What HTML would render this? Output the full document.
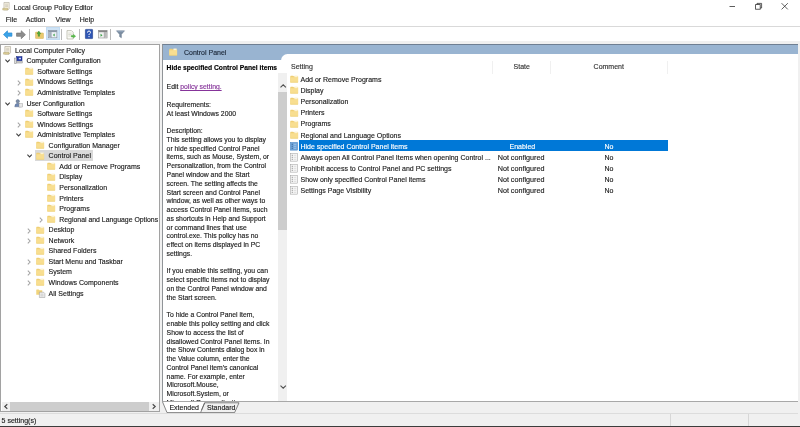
<!DOCTYPE html>
<html><head><meta charset="utf-8"><title>Local Group Policy Editor</title>
<style>
html,body{margin:0;padding:0;}
body{width:800px;height:427px;overflow:hidden;background:#fff;position:relative;font-family:"Liberation Sans",sans-serif;font-size:7.0px;color:#1a1a1a;}
.abs{position:absolute;}
.t{position:absolute;white-space:nowrap;line-height:10px;height:10px;font-size:7.0px;color:#202020;-webkit-text-stroke:0.14px currentColor;}
.t.b{font-size:6.72px;color:#000;}
.t.w{color:#fff;}
.t.d{font-size:6.84px;}
.t.d.b{font-size:6.72px;}
.lnk{color:#86349a;text-decoration:underline;}
.ic{position:absolute;display:block;overflow:visible;}
#all{position:absolute;left:0;top:0;width:800px;height:427px;overflow:hidden;filter:blur(0.42px);}
</style></head><body><div id="all">

<!-- title bar -->
<svg class="ic" style="left:1.6px;top:2.2px;width:8.2px;height:8.6px" viewBox="0 0 16 18">
<path d="M3.5 1 L14.5 1 L14.5 14 L12 16.5 L3.5 16.5 Z" fill="#f6f1e2" stroke="#9a9384" stroke-width="1"/>
<path d="M1 13.2 L11.5 13.2 L11.5 16.8 L1 16.8 Z" fill="#e3d39a" stroke="#a79a62" stroke-width="0.9"/>
<path d="M6 4.5H12M6 7H12M6 9.5H12" stroke="#b5b0a3" stroke-width="1"/>
</svg>
<div class="t" style="left:13.8px;top:2.6px;color:#222">Local Group Policy Editor</div>
<!-- window buttons -->
<svg class="ic" style="left:728px;top:2px;width:66px;height:10px" viewBox="0 0 66 10">
<path d="M1.5 4.5H7" stroke="#333" stroke-width="0.8"/>
<rect x="27.6" y="2.6" width="4.6" height="4.6" fill="none" stroke="#333" stroke-width="0.8"/>
<path d="M29 2.6V1.4H33.6V6H32.2" fill="none" stroke="#333" stroke-width="0.8"/>
<path d="M53.6 1.2L59.8 7.4M59.8 1.2L53.6 7.4" stroke="#333" stroke-width="0.8"/>
</svg>

<!-- menu -->
<div class="t" style="left:5.8px;top:15.0px">File</div>
<div class="t" style="left:25.8px;top:15.0px">Action</div>
<div class="t" style="left:55.6px;top:15.0px">View</div>
<div class="t" style="left:79.8px;top:15.0px">Help</div>
<div class="abs" style="left:0;top:25.6px;width:800px;height:1px;background:#d9d9d9"></div>

<!-- toolbar -->
<div class="abs" style="left:0;top:41.4px;width:800px;height:3.2px;background:#f0f0f0"></div>

<!-- back -->
<svg class="ic" style="left:3px;top:29.6px;width:9.4px;height:9.2px" viewBox="0 0 20 19">
<path d="M9.5 1.5 L1 9.5 L9.5 17.5 L9.5 13 L19 13 L19 6 L9.5 6 Z" fill="#3aa3e8" stroke="#2487d0" stroke-width="1.4" stroke-linejoin="round"/>
</svg>
<!-- forward -->
<svg class="ic" style="left:16.2px;top:29.6px;width:10px;height:9.4px" viewBox="0 0 20 19">
<path d="M10.5 1.5 L19 9.5 L10.5 17.5 L10.5 12.8 L1 12.8 L1 6.2 L10.5 6.2 Z" fill="#8c8c8c" stroke="#767676" stroke-width="1.4" stroke-linejoin="round"/>
</svg>
<div class="abs" style="left:29.4px;top:28.6px;width:0.8px;height:11.4px;background:#b9b9b9"></div>
<!-- up folder -->
<svg class="ic" style="left:34.8px;top:29.8px;width:9px;height:9px" viewBox="0 0 18 18">
<path d="M1 5 Q1 4 2 4 L6 4 L7.5 5.8 L16 5.8 Q17 5.8 17 6.8 L17 16 Q17 17 16 17 L2 17 Q1 17 1 16 Z" fill="#e9c96e" stroke="#c9a74a" stroke-width="0.8"/>
<path d="M4 9.5 L4 12 L6.5 12 L6.5 7 L9 7 L5.2 1.5 L1.5 7 L4 7 Z" transform="translate(2.5,0.5)" fill="#4caf3c" stroke="#2d7f22" stroke-width="0.8"/>
</svg>
<!-- show/hide tree (active) -->
<div class="abs" style="left:45.8px;top:27.2px;width:14.2px;height:12.8px;background:#cfe3f5;border:0.4px solid #c2dcf3;box-sizing:border-box"></div>
<svg class="ic" style="left:48.3px;top:30.4px;width:9.4px;height:8.2px" viewBox="0 0 19 17">
<rect x="0.8" y="0.8" width="17.4" height="15.4" fill="#eef2f6" stroke="#7f8b98" stroke-width="1.2"/>
<rect x="1.4" y="4.4" width="5" height="11.2" fill="#a9b4c0"/>
<rect x="0.8" y="0.8" width="17.4" height="3.6" fill="#8a97a6"/>
<path d="M6.5 4.4V16" stroke="#8a97a6" stroke-width="1.1"/>
<path d="M12.5 7.5 L12.5 13.5 L9 10.5 Z" transform="translate(1,0)" fill="#2e9a3a"/>
</svg>
<div class="abs" style="left:60.9px;top:28.6px;width:0.8px;height:11.4px;background:#b9b9b9"></div>
<!-- export -->
<svg class="ic" style="left:65.6px;top:29.6px;width:10.4px;height:9.6px" viewBox="0 0 21 19">
<path d="M2 1 L11 1 L14.5 4.5 L14.5 18 L2 18 Z" fill="#fbfbf6" stroke="#9b9b8b" stroke-width="1.1"/>
<path d="M4.5 6H11.5M4.5 9H11.5M4.5 12H9" stroke="#b9b9aa" stroke-width="1"/>
<path d="M10.5 11 L15 11 L15 8.6 L19.6 12.4 L15 16.2 L15 13.8 L10.5 13.8 Z" fill="#5cc04c" stroke="#3a9a2e" stroke-width="0.7"/>
</svg>
<div class="abs" style="left:79.4px;top:28.6px;width:0.8px;height:11.4px;background:#b9b9b9"></div>
<!-- help -->
<svg class="ic" style="left:84.8px;top:29.2px;width:8px;height:10px" viewBox="0 0 16 20">
<rect x="0.8" y="0.8" width="14.4" height="18.4" rx="1" fill="#2f56b5" stroke="#1c3a86" stroke-width="1.2"/>
<path d="M5 7.2 Q5 4 8 4 Q11 4 11 6.8 Q11 8.6 9.2 9.6 Q8 10.3 8 12" fill="none" stroke="#fff" stroke-width="2"/>
<circle cx="8" cy="15.2" r="1.3" fill="#fff"/>
</svg>
<!-- action pane -->
<svg class="ic" style="left:97.6px;top:30.4px;width:9.6px;height:8.4px" viewBox="0 0 19 17">
<rect x="0.8" y="0.8" width="17.4" height="15.4" fill="#f0f0f0" stroke="#8c8c8c" stroke-width="1.2"/>
<rect x="12.5" y="4.4" width="5.2" height="11.2" fill="#b9b9b9"/>
<rect x="0.8" y="0.8" width="17.4" height="3.6" fill="#858585"/>
<path d="M12.5 4.4V16" stroke="#979797" stroke-width="1.1"/>
<path d="M5 7.5 L5 13.5 L8.8 10.5 Z" fill="#2e9a3a"/>
</svg>
<div class="abs" style="left:110.3px;top:28.6px;width:0.8px;height:11.4px;background:#b9b9b9"></div>
<!-- filter -->
<svg class="ic" style="left:116.4px;top:30.2px;width:9px;height:8.8px" viewBox="0 0 20 19">
<path d="M1 1.5 L19 1.5 L12 9.5 L12 17 L8 14.5 L8 9.5 Z" fill="#7d8ea2" stroke="#66788c" stroke-width="1.1" stroke-linejoin="round"/>
<path d="M3.5 2.8 L16.5 2.8" stroke="#a9bfd6" stroke-width="1"/>
</svg>


<!-- tree pane -->
<div class="abs" style="left:0;top:44.2px;width:161px;height:369px;background:#f0f0f0"></div>
<div class="abs" style="left:0.2px;top:44.4px;width:159.8px;height:367.6px;background:#fff;border:0.7px solid #a2a2a2;box-sizing:border-box"></div>
<svg class="ic" style="left:3.10px;top:45.70px;width:8.4px;height:8.8px" viewBox="0 0 16 17"><path d="M3.5 1 L14.5 1 L14.5 13 L12 15.5 L3.5 15.5 Z" fill="#f6f1e2" stroke="#9a9384" stroke-width="1"/><path d="M1 12.5 L11.5 12.5 L11.5 15.8 L1 15.8 Z" fill="#e3d39a" stroke="#a79a62" stroke-width="0.9"/><path d="M6 4.5H12M6 7H12M6 9.5H12" stroke="#b5b0a3" stroke-width="1"/></svg>
<div class="t " style="left:15.00px;top:45.70px;">Local Computer Policy</div>
<svg class="ic" style="left:5.30px;top:59.26px;width:5.2px;height:3.6px" viewBox="0 0 5.2 3.6"><path d="M0.4 0.6 L2.6 2.9 L4.8 0.6" fill="none" stroke="#404040" stroke-width="1.05"/></svg>
<svg class="ic" style="left:14.30px;top:56.46px;width:9px;height:8.6px" viewBox="0 0 18 17"><rect x="5" y="1" width="11" height="8.5" fill="#2237a8" stroke="#1a2a7c" stroke-width="1"/><rect x="9.5" y="3.5" width="4.5" height="3" fill="#c9d6f7"/><rect x="3" y="11" width="14" height="3" fill="#c9c9c9" stroke="#8a8a8a" stroke-width="0.8"/><rect x="0.8" y="4" width="4.2" height="11" fill="#dcdcdc" stroke="#777" stroke-width="0.8"/></svg>
<div class="t " style="left:26.40px;top:56.26px;">Computer Configuration</div>
<svg class="ic" style="left:25.00px;top:67.12px;width:8.4px;height:7.8px" viewBox="0 0 16 15"><path d="M0.5 2.4 Q0.5 1.4 1.5 1.4 L6 1.4 L7.2 2.6 L15.5 2.6 L15.5 14 L0.5 14 Z" fill="#efcf74"/><path d="M8.5 1 L14.6 1 L14.6 5 L8.5 5 Z" fill="#fcf3d3"/><path d="M0.5 4.4 L15.5 4.4 L15.5 13.6 Q15.5 14.4 14.7 14.4 L1.3 14.4 Q0.5 14.4 0.5 13.6 Z" fill="#f8de90"/><path d="M0.5 14 L15.5 14" stroke="#e8c867" stroke-width="0.8"/></svg>
<div class="t " style="left:37.30px;top:66.82px;">Software Settings</div>
<svg class="ic" style="left:16.50px;top:79.68px;width:4px;height:6px" viewBox="0 0 4 6"><path d="M0.8 0.7 L3.1 3 L0.8 5.3" fill="none" stroke="#a2a2a2" stroke-width="1.05"/></svg>
<svg class="ic" style="left:25.00px;top:77.68px;width:8.4px;height:7.8px" viewBox="0 0 16 15"><path d="M0.5 2.4 Q0.5 1.4 1.5 1.4 L6 1.4 L7.2 2.6 L15.5 2.6 L15.5 14 L0.5 14 Z" fill="#efcf74"/><path d="M8.5 1 L14.6 1 L14.6 5 L8.5 5 Z" fill="#fcf3d3"/><path d="M0.5 4.4 L15.5 4.4 L15.5 13.6 Q15.5 14.4 14.7 14.4 L1.3 14.4 Q0.5 14.4 0.5 13.6 Z" fill="#f8de90"/><path d="M0.5 14 L15.5 14" stroke="#e8c867" stroke-width="0.8"/></svg>
<div class="t " style="left:37.30px;top:77.38px;">Windows Settings</div>
<svg class="ic" style="left:16.50px;top:90.24px;width:4px;height:6px" viewBox="0 0 4 6"><path d="M0.8 0.7 L3.1 3 L0.8 5.3" fill="none" stroke="#a2a2a2" stroke-width="1.05"/></svg>
<svg class="ic" style="left:25.00px;top:88.24px;width:8.4px;height:7.8px" viewBox="0 0 16 15"><path d="M0.5 2.4 Q0.5 1.4 1.5 1.4 L6 1.4 L7.2 2.6 L15.5 2.6 L15.5 14 L0.5 14 Z" fill="#efcf74"/><path d="M8.5 1 L14.6 1 L14.6 5 L8.5 5 Z" fill="#fcf3d3"/><path d="M0.5 4.4 L15.5 4.4 L15.5 13.6 Q15.5 14.4 14.7 14.4 L1.3 14.4 Q0.5 14.4 0.5 13.6 Z" fill="#f8de90"/><path d="M0.5 14 L15.5 14" stroke="#e8c867" stroke-width="0.8"/></svg>
<div class="t " style="left:37.30px;top:87.94px;">Administrative Templates</div>
<svg class="ic" style="left:5.30px;top:101.50px;width:5.2px;height:3.6px" viewBox="0 0 5.2 3.6"><path d="M0.4 0.6 L2.6 2.9 L4.8 0.6" fill="none" stroke="#404040" stroke-width="1.05"/></svg>
<svg class="ic" style="left:14.30px;top:98.70px;width:9px;height:8.6px" viewBox="0 0 18 17"><circle cx="7.5" cy="4.5" r="3.4" fill="#7d8ea8" stroke="#4f5f78" stroke-width="0.8"/><path d="M1.5 15.5 Q1.5 8.5 7.5 8.5 Q13.5 8.5 13.5 15.5 Z" fill="#6f88b3" stroke="#4a5c7c" stroke-width="0.8"/><rect x="10" y="9.5" width="7" height="6.5" fill="#e9e9e9" stroke="#8b8b8b" stroke-width="0.8"/></svg>
<div class="t " style="left:26.40px;top:98.50px;">User Configuration</div>
<svg class="ic" style="left:25.00px;top:109.36px;width:8.4px;height:7.8px" viewBox="0 0 16 15"><path d="M0.5 2.4 Q0.5 1.4 1.5 1.4 L6 1.4 L7.2 2.6 L15.5 2.6 L15.5 14 L0.5 14 Z" fill="#efcf74"/><path d="M8.5 1 L14.6 1 L14.6 5 L8.5 5 Z" fill="#fcf3d3"/><path d="M0.5 4.4 L15.5 4.4 L15.5 13.6 Q15.5 14.4 14.7 14.4 L1.3 14.4 Q0.5 14.4 0.5 13.6 Z" fill="#f8de90"/><path d="M0.5 14 L15.5 14" stroke="#e8c867" stroke-width="0.8"/></svg>
<div class="t " style="left:37.30px;top:109.06px;">Software Settings</div>
<svg class="ic" style="left:16.50px;top:121.92px;width:4px;height:6px" viewBox="0 0 4 6"><path d="M0.8 0.7 L3.1 3 L0.8 5.3" fill="none" stroke="#a2a2a2" stroke-width="1.05"/></svg>
<svg class="ic" style="left:25.00px;top:119.92px;width:8.4px;height:7.8px" viewBox="0 0 16 15"><path d="M0.5 2.4 Q0.5 1.4 1.5 1.4 L6 1.4 L7.2 2.6 L15.5 2.6 L15.5 14 L0.5 14 Z" fill="#efcf74"/><path d="M8.5 1 L14.6 1 L14.6 5 L8.5 5 Z" fill="#fcf3d3"/><path d="M0.5 4.4 L15.5 4.4 L15.5 13.6 Q15.5 14.4 14.7 14.4 L1.3 14.4 Q0.5 14.4 0.5 13.6 Z" fill="#f8de90"/><path d="M0.5 14 L15.5 14" stroke="#e8c867" stroke-width="0.8"/></svg>
<div class="t " style="left:37.30px;top:119.62px;">Windows Settings</div>
<svg class="ic" style="left:16.00px;top:133.18px;width:5.2px;height:3.6px" viewBox="0 0 5.2 3.6"><path d="M0.4 0.6 L2.6 2.9 L4.8 0.6" fill="none" stroke="#404040" stroke-width="1.05"/></svg>
<svg class="ic" style="left:25.00px;top:130.48px;width:8.4px;height:7.8px" viewBox="0 0 16 15"><path d="M0.5 2.4 Q0.5 1.4 1.5 1.4 L6 1.4 L7.2 2.6 L15.5 2.6 L15.5 14 L0.5 14 Z" fill="#efcf74"/><path d="M8.5 1 L14.6 1 L14.6 5 L8.5 5 Z" fill="#fcf3d3"/><path d="M0.5 4.4 L15.5 4.4 L15.5 13.6 Q15.5 14.4 14.7 14.4 L1.3 14.4 Q0.5 14.4 0.5 13.6 Z" fill="#f8de90"/><path d="M0.5 14 L15.5 14" stroke="#e8c867" stroke-width="0.8"/></svg>
<div class="t " style="left:37.30px;top:130.18px;">Administrative Templates</div>
<svg class="ic" style="left:35.80px;top:141.04px;width:8.4px;height:7.8px" viewBox="0 0 16 15"><path d="M0.5 2.4 Q0.5 1.4 1.5 1.4 L6 1.4 L7.2 2.6 L15.5 2.6 L15.5 14 L0.5 14 Z" fill="#efcf74"/><path d="M8.5 1 L14.6 1 L14.6 5 L8.5 5 Z" fill="#fcf3d3"/><path d="M0.5 4.4 L15.5 4.4 L15.5 13.6 Q15.5 14.4 14.7 14.4 L1.3 14.4 Q0.5 14.4 0.5 13.6 Z" fill="#f8de90"/><path d="M0.5 14 L15.5 14" stroke="#e8c867" stroke-width="0.8"/></svg>
<div class="t " style="left:48.60px;top:140.74px;">Configuration Manager</div>
<div class="abs" style="left:35px;top:150.40px;width:57.7px;height:10.7px;background:#d9d9d9"></div>
<svg class="ic" style="left:26.80px;top:154.30px;width:5.2px;height:3.6px" viewBox="0 0 5.2 3.6"><path d="M0.4 0.6 L2.6 2.9 L4.8 0.6" fill="none" stroke="#404040" stroke-width="1.05"/></svg>
<svg class="ic" style="left:35.80px;top:151.60px;width:8.4px;height:7.8px" viewBox="0 0 16 15"><path d="M0.5 2.4 Q0.5 1.4 1.5 1.4 L6 1.4 L7.2 2.6 L15.5 2.6 L15.5 14 L0.5 14 Z" fill="#efcf74"/><path d="M8.5 1 L14.6 1 L14.6 5 L8.5 5 Z" fill="#fcf3d3"/><path d="M0.5 4.4 L15.5 4.4 L15.5 13.6 Q15.5 14.4 14.7 14.4 L1.3 14.4 Q0.5 14.4 0.5 13.6 Z" fill="#f8de90"/><path d="M0.5 14 L15.5 14" stroke="#e8c867" stroke-width="0.8"/></svg>
<div class="t " style="left:48.60px;top:151.30px;">Control Panel</div>
<svg class="ic" style="left:47.00px;top:162.16px;width:8.4px;height:7.8px" viewBox="0 0 16 15"><path d="M0.5 2.4 Q0.5 1.4 1.5 1.4 L6 1.4 L7.2 2.6 L15.5 2.6 L15.5 14 L0.5 14 Z" fill="#efcf74"/><path d="M8.5 1 L14.6 1 L14.6 5 L8.5 5 Z" fill="#fcf3d3"/><path d="M0.5 4.4 L15.5 4.4 L15.5 13.6 Q15.5 14.4 14.7 14.4 L1.3 14.4 Q0.5 14.4 0.5 13.6 Z" fill="#f8de90"/><path d="M0.5 14 L15.5 14" stroke="#e8c867" stroke-width="0.8"/></svg>
<div class="t " style="left:59.30px;top:161.86px;">Add or Remove Programs</div>
<svg class="ic" style="left:47.00px;top:172.72px;width:8.4px;height:7.8px" viewBox="0 0 16 15"><path d="M0.5 2.4 Q0.5 1.4 1.5 1.4 L6 1.4 L7.2 2.6 L15.5 2.6 L15.5 14 L0.5 14 Z" fill="#efcf74"/><path d="M8.5 1 L14.6 1 L14.6 5 L8.5 5 Z" fill="#fcf3d3"/><path d="M0.5 4.4 L15.5 4.4 L15.5 13.6 Q15.5 14.4 14.7 14.4 L1.3 14.4 Q0.5 14.4 0.5 13.6 Z" fill="#f8de90"/><path d="M0.5 14 L15.5 14" stroke="#e8c867" stroke-width="0.8"/></svg>
<div class="t " style="left:59.30px;top:172.42px;">Display</div>
<svg class="ic" style="left:47.00px;top:183.28px;width:8.4px;height:7.8px" viewBox="0 0 16 15"><path d="M0.5 2.4 Q0.5 1.4 1.5 1.4 L6 1.4 L7.2 2.6 L15.5 2.6 L15.5 14 L0.5 14 Z" fill="#efcf74"/><path d="M8.5 1 L14.6 1 L14.6 5 L8.5 5 Z" fill="#fcf3d3"/><path d="M0.5 4.4 L15.5 4.4 L15.5 13.6 Q15.5 14.4 14.7 14.4 L1.3 14.4 Q0.5 14.4 0.5 13.6 Z" fill="#f8de90"/><path d="M0.5 14 L15.5 14" stroke="#e8c867" stroke-width="0.8"/></svg>
<div class="t " style="left:59.30px;top:182.98px;">Personalization</div>
<svg class="ic" style="left:47.00px;top:193.84px;width:8.4px;height:7.8px" viewBox="0 0 16 15"><path d="M0.5 2.4 Q0.5 1.4 1.5 1.4 L6 1.4 L7.2 2.6 L15.5 2.6 L15.5 14 L0.5 14 Z" fill="#efcf74"/><path d="M8.5 1 L14.6 1 L14.6 5 L8.5 5 Z" fill="#fcf3d3"/><path d="M0.5 4.4 L15.5 4.4 L15.5 13.6 Q15.5 14.4 14.7 14.4 L1.3 14.4 Q0.5 14.4 0.5 13.6 Z" fill="#f8de90"/><path d="M0.5 14 L15.5 14" stroke="#e8c867" stroke-width="0.8"/></svg>
<div class="t " style="left:59.30px;top:193.54px;">Printers</div>
<svg class="ic" style="left:47.00px;top:204.40px;width:8.4px;height:7.8px" viewBox="0 0 16 15"><path d="M0.5 2.4 Q0.5 1.4 1.5 1.4 L6 1.4 L7.2 2.6 L15.5 2.6 L15.5 14 L0.5 14 Z" fill="#efcf74"/><path d="M8.5 1 L14.6 1 L14.6 5 L8.5 5 Z" fill="#fcf3d3"/><path d="M0.5 4.4 L15.5 4.4 L15.5 13.6 Q15.5 14.4 14.7 14.4 L1.3 14.4 Q0.5 14.4 0.5 13.6 Z" fill="#f8de90"/><path d="M0.5 14 L15.5 14" stroke="#e8c867" stroke-width="0.8"/></svg>
<div class="t " style="left:59.30px;top:204.10px;">Programs</div>
<svg class="ic" style="left:38.50px;top:216.96px;width:4px;height:6px" viewBox="0 0 4 6"><path d="M0.8 0.7 L3.1 3 L0.8 5.3" fill="none" stroke="#a2a2a2" stroke-width="1.05"/></svg>
<svg class="ic" style="left:47.00px;top:214.96px;width:8.4px;height:7.8px" viewBox="0 0 16 15"><path d="M0.5 2.4 Q0.5 1.4 1.5 1.4 L6 1.4 L7.2 2.6 L15.5 2.6 L15.5 14 L0.5 14 Z" fill="#efcf74"/><path d="M8.5 1 L14.6 1 L14.6 5 L8.5 5 Z" fill="#fcf3d3"/><path d="M0.5 4.4 L15.5 4.4 L15.5 13.6 Q15.5 14.4 14.7 14.4 L1.3 14.4 Q0.5 14.4 0.5 13.6 Z" fill="#f8de90"/><path d="M0.5 14 L15.5 14" stroke="#e8c867" stroke-width="0.8"/></svg>
<div class="t " style="left:59.30px;top:214.66px;font-size:6.9px">Regional and Language Options</div>
<svg class="ic" style="left:27.30px;top:227.52px;width:4px;height:6px" viewBox="0 0 4 6"><path d="M0.8 0.7 L3.1 3 L0.8 5.3" fill="none" stroke="#a2a2a2" stroke-width="1.05"/></svg>
<svg class="ic" style="left:35.80px;top:225.52px;width:8.4px;height:7.8px" viewBox="0 0 16 15"><path d="M0.5 2.4 Q0.5 1.4 1.5 1.4 L6 1.4 L7.2 2.6 L15.5 2.6 L15.5 14 L0.5 14 Z" fill="#efcf74"/><path d="M8.5 1 L14.6 1 L14.6 5 L8.5 5 Z" fill="#fcf3d3"/><path d="M0.5 4.4 L15.5 4.4 L15.5 13.6 Q15.5 14.4 14.7 14.4 L1.3 14.4 Q0.5 14.4 0.5 13.6 Z" fill="#f8de90"/><path d="M0.5 14 L15.5 14" stroke="#e8c867" stroke-width="0.8"/></svg>
<div class="t " style="left:48.60px;top:225.22px;">Desktop</div>
<svg class="ic" style="left:27.30px;top:238.08px;width:4px;height:6px" viewBox="0 0 4 6"><path d="M0.8 0.7 L3.1 3 L0.8 5.3" fill="none" stroke="#a2a2a2" stroke-width="1.05"/></svg>
<svg class="ic" style="left:35.80px;top:236.08px;width:8.4px;height:7.8px" viewBox="0 0 16 15"><path d="M0.5 2.4 Q0.5 1.4 1.5 1.4 L6 1.4 L7.2 2.6 L15.5 2.6 L15.5 14 L0.5 14 Z" fill="#efcf74"/><path d="M8.5 1 L14.6 1 L14.6 5 L8.5 5 Z" fill="#fcf3d3"/><path d="M0.5 4.4 L15.5 4.4 L15.5 13.6 Q15.5 14.4 14.7 14.4 L1.3 14.4 Q0.5 14.4 0.5 13.6 Z" fill="#f8de90"/><path d="M0.5 14 L15.5 14" stroke="#e8c867" stroke-width="0.8"/></svg>
<div class="t " style="left:48.60px;top:235.78px;">Network</div>
<svg class="ic" style="left:35.80px;top:246.64px;width:8.4px;height:7.8px" viewBox="0 0 16 15"><path d="M0.5 2.4 Q0.5 1.4 1.5 1.4 L6 1.4 L7.2 2.6 L15.5 2.6 L15.5 14 L0.5 14 Z" fill="#efcf74"/><path d="M8.5 1 L14.6 1 L14.6 5 L8.5 5 Z" fill="#fcf3d3"/><path d="M0.5 4.4 L15.5 4.4 L15.5 13.6 Q15.5 14.4 14.7 14.4 L1.3 14.4 Q0.5 14.4 0.5 13.6 Z" fill="#f8de90"/><path d="M0.5 14 L15.5 14" stroke="#e8c867" stroke-width="0.8"/></svg>
<div class="t " style="left:48.60px;top:246.34px;">Shared Folders</div>
<svg class="ic" style="left:27.30px;top:259.20px;width:4px;height:6px" viewBox="0 0 4 6"><path d="M0.8 0.7 L3.1 3 L0.8 5.3" fill="none" stroke="#a2a2a2" stroke-width="1.05"/></svg>
<svg class="ic" style="left:35.80px;top:257.20px;width:8.4px;height:7.8px" viewBox="0 0 16 15"><path d="M0.5 2.4 Q0.5 1.4 1.5 1.4 L6 1.4 L7.2 2.6 L15.5 2.6 L15.5 14 L0.5 14 Z" fill="#efcf74"/><path d="M8.5 1 L14.6 1 L14.6 5 L8.5 5 Z" fill="#fcf3d3"/><path d="M0.5 4.4 L15.5 4.4 L15.5 13.6 Q15.5 14.4 14.7 14.4 L1.3 14.4 Q0.5 14.4 0.5 13.6 Z" fill="#f8de90"/><path d="M0.5 14 L15.5 14" stroke="#e8c867" stroke-width="0.8"/></svg>
<div class="t " style="left:48.60px;top:256.90px;">Start Menu and Taskbar</div>
<svg class="ic" style="left:27.30px;top:269.76px;width:4px;height:6px" viewBox="0 0 4 6"><path d="M0.8 0.7 L3.1 3 L0.8 5.3" fill="none" stroke="#a2a2a2" stroke-width="1.05"/></svg>
<svg class="ic" style="left:35.80px;top:267.76px;width:8.4px;height:7.8px" viewBox="0 0 16 15"><path d="M0.5 2.4 Q0.5 1.4 1.5 1.4 L6 1.4 L7.2 2.6 L15.5 2.6 L15.5 14 L0.5 14 Z" fill="#efcf74"/><path d="M8.5 1 L14.6 1 L14.6 5 L8.5 5 Z" fill="#fcf3d3"/><path d="M0.5 4.4 L15.5 4.4 L15.5 13.6 Q15.5 14.4 14.7 14.4 L1.3 14.4 Q0.5 14.4 0.5 13.6 Z" fill="#f8de90"/><path d="M0.5 14 L15.5 14" stroke="#e8c867" stroke-width="0.8"/></svg>
<div class="t " style="left:48.60px;top:267.46px;">System</div>
<svg class="ic" style="left:27.30px;top:280.32px;width:4px;height:6px" viewBox="0 0 4 6"><path d="M0.8 0.7 L3.1 3 L0.8 5.3" fill="none" stroke="#a2a2a2" stroke-width="1.05"/></svg>
<svg class="ic" style="left:35.80px;top:278.32px;width:8.4px;height:7.8px" viewBox="0 0 16 15"><path d="M0.5 2.4 Q0.5 1.4 1.5 1.4 L6 1.4 L7.2 2.6 L15.5 2.6 L15.5 14 L0.5 14 Z" fill="#efcf74"/><path d="M8.5 1 L14.6 1 L14.6 5 L8.5 5 Z" fill="#fcf3d3"/><path d="M0.5 4.4 L15.5 4.4 L15.5 13.6 Q15.5 14.4 14.7 14.4 L1.3 14.4 Q0.5 14.4 0.5 13.6 Z" fill="#f8de90"/><path d="M0.5 14 L15.5 14" stroke="#e8c867" stroke-width="0.8"/></svg>
<div class="t " style="left:48.60px;top:278.02px;">Windows Components</div>
<svg class="ic" style="left:35.80px;top:288.78px;width:9.4px;height:9px" viewBox="0 0 18 17"><path d="M0.5 2 Q0.5 1 1.5 1 L5 1 L6.5 2.5 L12 2.5 L12 11 L0.5 11 Z" fill="#f1d47c"/><path d="M6.5 6 L14.5 6 L17 8.5 L17 16.2 L6.5 16.2 Z" fill="#f3f3f3" stroke="#8d8d8d" stroke-width="0.9"/><path d="M8.5 9.5H14.5M8.5 11.5H14.5M8.5 13.5H14.5" stroke="#a9a9a9" stroke-width="0.8"/></svg>
<div class="t " style="left:48.60px;top:288.58px;">All Settings</div>
<!-- tree hscroll -->
<div class="abs" style="left:1.6px;top:402.4px;width:157.6px;height:9px;background:#f0f0f0"></div>
<div class="abs" style="left:10.4px;top:402.4px;width:138.4px;height:9px;background:#cdcdcd"></div>
<svg class="ic" style="left:3.6px;top:404.4px;width:4px;height:5px" viewBox="0 0 4 5"><path d="M3.3 0.3L0.8 2.5L3.3 4.7" fill="none" stroke="#484848" stroke-width="1.15"/></svg>
<svg class="ic" style="left:152.4px;top:404.4px;width:4px;height:5px" viewBox="0 0 4 5"><path d="M0.7 0.3L3.2 2.5L0.7 4.7" fill="none" stroke="#484848" stroke-width="1.15"/></svg>

<!-- right pane -->
<div class="abs" style="left:161px;top:44.2px;width:639px;height:369px;background:#f0f0f0"></div>
<div class="abs" style="left:161.8px;top:44.2px;width:636px;height:357.6px;background:#fff;border-left:0.9px solid #909498;border-top:1px solid #6f7f92;border-bottom:1px solid #a8a8a8;box-sizing:border-box"></div>
<div class="abs" style="left:162.8px;top:45.2px;width:636.4px;height:14.5px;background:#99b4d1"></div>
<div class="abs" style="left:281.2px;top:53.8px;width:520px;height:12px;background:#fff;border-top-left-radius:6.5px"></div>
<svg class="ic" style="left:169.20px;top:48.40px;width:8.4px;height:7.8px" viewBox="0 0 16 15"><path d="M0.5 2.4 Q0.5 1.4 1.5 1.4 L6 1.4 L7.2 2.6 L15.5 2.6 L15.5 14 L0.5 14 Z" fill="#efcf74"/><path d="M8.5 1 L14.6 1 L14.6 5 L8.5 5 Z" fill="#fcf3d3"/><path d="M0.5 4.4 L15.5 4.4 L15.5 13.6 Q15.5 14.4 14.7 14.4 L1.3 14.4 Q0.5 14.4 0.5 13.6 Z" fill="#f8de90"/><path d="M0.5 14 L15.5 14" stroke="#e8c867" stroke-width="0.8"/></svg>
<div class="t" style="left:184px;top:48px;color:#1b2738">Control Panel</div>

<div class="abs" style="left:0;top:0;width:278px;height:401.2px;overflow:hidden">
<div class="t b d" style="left:166.60px;top:62.80px;"><b>Hide specified Control Panel items</b></div>
<div class="t  d" style="left:166.60px;top:82.00px;">Edit <span class="lnk">policy setting.</span></div>
<div class="t  d" style="left:166.60px;top:99.90px;">Requirements:</div>
<div class="t  d" style="left:166.60px;top:108.80px;">At least Windows 2000</div>
<div class="t  d" style="left:166.60px;top:126.00px;">Description:</div>
<div class="t  d" style="left:166.60px;top:134.90px;">This setting allows you to display</div>
<div class="t  d" style="left:166.60px;top:143.67px;">or hide specified Control Panel</div>
<div class="t  d" style="left:166.60px;top:152.44px;">items, such as Mouse, System, or</div>
<div class="t  d" style="left:166.60px;top:161.21px;">Personalization, from the Control</div>
<div class="t  d" style="left:166.60px;top:169.98px;">Panel window and the Start</div>
<div class="t  d" style="left:166.60px;top:178.75px;">screen. The setting affects the</div>
<div class="t  d" style="left:166.60px;top:187.52px;">Start screen and Control Panel</div>
<div class="t  d" style="left:166.60px;top:196.29px;">window, as well as other ways to</div>
<div class="t  d" style="left:166.60px;top:205.06px;">access Control Panel items, such</div>
<div class="t  d" style="left:166.60px;top:213.83px;">as shortcuts in Help and Support</div>
<div class="t  d" style="left:166.60px;top:222.60px;">or command lines that use</div>
<div class="t  d" style="left:166.60px;top:231.37px;">control.exe. This policy has no</div>
<div class="t  d" style="left:166.60px;top:240.14px;">effect on items displayed in PC</div>
<div class="t  d" style="left:166.60px;top:248.91px;">settings.</div>
<div class="t  d" style="left:166.60px;top:266.45px;">If you enable this setting, you can</div>
<div class="t  d" style="left:166.60px;top:275.22px;">select specific items not to display</div>
<div class="t  d" style="left:166.60px;top:283.99px;">on the Control Panel window and</div>
<div class="t  d" style="left:166.60px;top:292.76px;">the Start screen.</div>
<div class="t  d" style="left:166.60px;top:310.30px;">To hide a Control Panel item,</div>
<div class="t  d" style="left:166.60px;top:319.07px;">enable this policy setting and click</div>
<div class="t  d" style="left:166.60px;top:327.84px;">Show to access the list of</div>
<div class="t  d" style="left:166.60px;top:336.61px;">disallowed Control Panel items. In</div>
<div class="t  d" style="left:166.60px;top:345.38px;">the Show Contents dialog box in</div>
<div class="t  d" style="left:166.60px;top:354.15px;">the Value column, enter the</div>
<div class="t  d" style="left:166.60px;top:362.92px;">Control Panel item's canonical</div>
<div class="t  d" style="left:166.60px;top:371.69px;">name. For example, enter</div>
<div class="t  d" style="left:166.60px;top:380.46px;">Microsoft.Mouse,</div>
<div class="t  d" style="left:166.60px;top:389.23px;">Microsoft.System, or</div>
<div class="t  d" style="left:166.60px;top:398.00px;">Microsoft.Personalization</div>
</div>
<!-- desc fade bottom cover -->

<!-- desc scrollbar -->
<div class="abs" style="left:278.2px;top:73.4px;width:9px;height:327.6px;background:#f0f0f0"></div>
<div class="abs" style="left:278.2px;top:91.5px;width:9px;height:138px;background:#cdcdcd"></div>
<svg class="ic" style="left:279.6px;top:84.2px;width:6.4px;height:4px" viewBox="0 0 6.4 4"><path d="M0.5 3.4L3.2 0.8L5.9 3.4" fill="none" stroke="#505050" stroke-width="1.1"/></svg>
<svg class="ic" style="left:279.6px;top:385.2px;width:6.4px;height:4px" viewBox="0 0 6.4 4"><path d="M0.5 0.6L3.2 3.2L5.9 0.6" fill="none" stroke="#505050" stroke-width="1.1"/></svg>

<!-- list header -->
<div class="t" style="left:291px;top:61.6px;color:#333">Setting</div>
<div class="t" style="left:513.6px;top:61.6px;color:#333">State</div>
<div class="t" style="left:593.6px;top:61.6px;color:#333">Comment</div>
<div class="abs" style="left:492px;top:60.5px;width:1px;height:13px;background:#f0f0f0"></div>
<div class="abs" style="left:550px;top:60.5px;width:1px;height:13px;background:#f0f0f0"></div>
<div class="abs" style="left:667px;top:60.5px;width:1px;height:13px;background:#f0f0f0"></div>
<svg class="ic" style="left:289.70px;top:75.20px;width:8.4px;height:7.8px" viewBox="0 0 16 15"><path d="M0.5 2.4 Q0.5 1.4 1.5 1.4 L6 1.4 L7.2 2.6 L15.5 2.6 L15.5 14 L0.5 14 Z" fill="#efcf74"/><path d="M8.5 1 L14.6 1 L14.6 5 L8.5 5 Z" fill="#fcf3d3"/><path d="M0.5 4.4 L15.5 4.4 L15.5 13.6 Q15.5 14.4 14.7 14.4 L1.3 14.4 Q0.5 14.4 0.5 13.6 Z" fill="#f8de90"/><path d="M0.5 14 L15.5 14" stroke="#e8c867" stroke-width="0.8"/></svg>
<div class="t " style="left:300.50px;top:74.90px;">Add or Remove Programs</div>
<svg class="ic" style="left:289.70px;top:86.32px;width:8.4px;height:7.8px" viewBox="0 0 16 15"><path d="M0.5 2.4 Q0.5 1.4 1.5 1.4 L6 1.4 L7.2 2.6 L15.5 2.6 L15.5 14 L0.5 14 Z" fill="#efcf74"/><path d="M8.5 1 L14.6 1 L14.6 5 L8.5 5 Z" fill="#fcf3d3"/><path d="M0.5 4.4 L15.5 4.4 L15.5 13.6 Q15.5 14.4 14.7 14.4 L1.3 14.4 Q0.5 14.4 0.5 13.6 Z" fill="#f8de90"/><path d="M0.5 14 L15.5 14" stroke="#e8c867" stroke-width="0.8"/></svg>
<div class="t " style="left:300.50px;top:86.02px;">Display</div>
<svg class="ic" style="left:289.70px;top:97.44px;width:8.4px;height:7.8px" viewBox="0 0 16 15"><path d="M0.5 2.4 Q0.5 1.4 1.5 1.4 L6 1.4 L7.2 2.6 L15.5 2.6 L15.5 14 L0.5 14 Z" fill="#efcf74"/><path d="M8.5 1 L14.6 1 L14.6 5 L8.5 5 Z" fill="#fcf3d3"/><path d="M0.5 4.4 L15.5 4.4 L15.5 13.6 Q15.5 14.4 14.7 14.4 L1.3 14.4 Q0.5 14.4 0.5 13.6 Z" fill="#f8de90"/><path d="M0.5 14 L15.5 14" stroke="#e8c867" stroke-width="0.8"/></svg>
<div class="t " style="left:300.50px;top:97.14px;">Personalization</div>
<svg class="ic" style="left:289.70px;top:108.56px;width:8.4px;height:7.8px" viewBox="0 0 16 15"><path d="M0.5 2.4 Q0.5 1.4 1.5 1.4 L6 1.4 L7.2 2.6 L15.5 2.6 L15.5 14 L0.5 14 Z" fill="#efcf74"/><path d="M8.5 1 L14.6 1 L14.6 5 L8.5 5 Z" fill="#fcf3d3"/><path d="M0.5 4.4 L15.5 4.4 L15.5 13.6 Q15.5 14.4 14.7 14.4 L1.3 14.4 Q0.5 14.4 0.5 13.6 Z" fill="#f8de90"/><path d="M0.5 14 L15.5 14" stroke="#e8c867" stroke-width="0.8"/></svg>
<div class="t " style="left:300.50px;top:108.26px;">Printers</div>
<svg class="ic" style="left:289.70px;top:119.68px;width:8.4px;height:7.8px" viewBox="0 0 16 15"><path d="M0.5 2.4 Q0.5 1.4 1.5 1.4 L6 1.4 L7.2 2.6 L15.5 2.6 L15.5 14 L0.5 14 Z" fill="#efcf74"/><path d="M8.5 1 L14.6 1 L14.6 5 L8.5 5 Z" fill="#fcf3d3"/><path d="M0.5 4.4 L15.5 4.4 L15.5 13.6 Q15.5 14.4 14.7 14.4 L1.3 14.4 Q0.5 14.4 0.5 13.6 Z" fill="#f8de90"/><path d="M0.5 14 L15.5 14" stroke="#e8c867" stroke-width="0.8"/></svg>
<div class="t " style="left:300.50px;top:119.38px;">Programs</div>
<svg class="ic" style="left:289.70px;top:130.80px;width:8.4px;height:7.8px" viewBox="0 0 16 15"><path d="M0.5 2.4 Q0.5 1.4 1.5 1.4 L6 1.4 L7.2 2.6 L15.5 2.6 L15.5 14 L0.5 14 Z" fill="#efcf74"/><path d="M8.5 1 L14.6 1 L14.6 5 L8.5 5 Z" fill="#fcf3d3"/><path d="M0.5 4.4 L15.5 4.4 L15.5 13.6 Q15.5 14.4 14.7 14.4 L1.3 14.4 Q0.5 14.4 0.5 13.6 Z" fill="#f8de90"/><path d="M0.5 14 L15.5 14" stroke="#e8c867" stroke-width="0.8"/></svg>
<div class="t " style="left:300.50px;top:130.50px;">Regional and Language Options</div>
<div class="abs" style="left:299px;top:140.22px;width:368.5px;height:10.9px;background:#0078d7"></div>
<svg class="ic" style="left:290.00px;top:141.82px;width:8px;height:8.6px" viewBox="0 0 16 17"><rect x="0.8" y="0.8" width="14.4" height="15.4" fill="#6ea5da" stroke="#3f7fc0" stroke-width="1"/><path d="M3.5 4.5H5.5M3.5 8.5H5.5M3.5 12.5H5.5" stroke="#1d3f6e" stroke-width="1.4"/><path d="M7.5 4.5H12.5M7.5 8.5H12.5M7.5 12.5H12.5" stroke="#cfe2f5" stroke-width="1"/></svg>
<div class="t w" style="left:300.50px;top:141.62px;">Hide specified Control Panel items</div>
<div class="t w" style="left:509.50px;top:141.62px;">Enabled</div>
<div class="t w" style="left:604.50px;top:141.62px;">No</div>
<svg class="ic" style="left:290.00px;top:152.94px;width:8px;height:8.6px" viewBox="0 0 16 17"><rect x="0.8" y="0.8" width="14.4" height="15.4" fill="#f7f7f7" stroke="#9b9b9b" stroke-width="1"/><path d="M3.5 4.5H5.5M3.5 8.5H5.5M3.5 12.5H5.5" stroke="#555" stroke-width="1.4"/><path d="M7.5 4.5H12.5M7.5 8.5H12.5M7.5 12.5H12.5" stroke="#c2c2c2" stroke-width="1"/></svg>
<div class="t " style="left:300.50px;top:152.74px;">Always open All Control Panel Items when opening Control ...</div>
<div class="t " style="left:497.70px;top:152.74px;font-size:7.2px">Not configured</div>
<div class="t " style="left:604.50px;top:152.74px;">No</div>
<svg class="ic" style="left:290.00px;top:164.06px;width:8px;height:8.6px" viewBox="0 0 16 17"><rect x="0.8" y="0.8" width="14.4" height="15.4" fill="#f7f7f7" stroke="#9b9b9b" stroke-width="1"/><path d="M3.5 4.5H5.5M3.5 8.5H5.5M3.5 12.5H5.5" stroke="#555" stroke-width="1.4"/><path d="M7.5 4.5H12.5M7.5 8.5H12.5M7.5 12.5H12.5" stroke="#c2c2c2" stroke-width="1"/></svg>
<div class="t " style="left:300.50px;top:163.86px;">Prohibit access to Control Panel and PC settings</div>
<div class="t " style="left:497.70px;top:163.86px;font-size:7.2px">Not configured</div>
<div class="t " style="left:604.50px;top:163.86px;">No</div>
<svg class="ic" style="left:290.00px;top:175.18px;width:8px;height:8.6px" viewBox="0 0 16 17"><rect x="0.8" y="0.8" width="14.4" height="15.4" fill="#f7f7f7" stroke="#9b9b9b" stroke-width="1"/><path d="M3.5 4.5H5.5M3.5 8.5H5.5M3.5 12.5H5.5" stroke="#555" stroke-width="1.4"/><path d="M7.5 4.5H12.5M7.5 8.5H12.5M7.5 12.5H12.5" stroke="#c2c2c2" stroke-width="1"/></svg>
<div class="t " style="left:300.50px;top:174.98px;">Show only specified Control Panel items</div>
<div class="t " style="left:497.70px;top:174.98px;font-size:7.2px">Not configured</div>
<div class="t " style="left:604.50px;top:174.98px;">No</div>
<svg class="ic" style="left:290.00px;top:186.30px;width:8px;height:8.6px" viewBox="0 0 16 17"><rect x="0.8" y="0.8" width="14.4" height="15.4" fill="#f7f7f7" stroke="#9b9b9b" stroke-width="1"/><path d="M3.5 4.5H5.5M3.5 8.5H5.5M3.5 12.5H5.5" stroke="#555" stroke-width="1.4"/><path d="M7.5 4.5H12.5M7.5 8.5H12.5M7.5 12.5H12.5" stroke="#c2c2c2" stroke-width="1"/></svg>
<div class="t " style="left:300.50px;top:186.10px;">Settings Page Visibility</div>
<div class="t " style="left:497.70px;top:186.10px;font-size:7.2px">Not configured</div>
<div class="t " style="left:604.50px;top:186.10px;">No</div>

<!-- tabs -->
<svg class="ic" style="left:161px;top:400.6px;width:90px;height:13px" viewBox="0 0 90 13">
<path d="M1.6 1 L6 11.6 L39.6 11.6 L43.6 1 Z" fill="#fff"/>
<path d="M1.6 1 L6 11.6 L39.6 11.6 L43.6 1.6" fill="none" stroke="#555" stroke-width="0.7"/>
<path d="M40.6 9 L43.8 1.8 L78 1.8 L73.6 11.6 L39.6 11.6" fill="none" stroke="#555" stroke-width="0.7"/>
</svg>
<div class="t" style="left:169.4px;top:402.9px">Extended</div>
<div class="t" style="left:207px;top:402.9px">Standard</div>

<!-- status bar -->
<div class="abs" style="left:0;top:413px;width:800px;height:13px;background:#f0f0f0;border-top:0.6px solid #dcdcdc"></div>
<div class="t" style="left:1.6px;top:415.6px">5 setting(s)</div>
<div class="abs" style="left:670.4px;top:414px;width:0.8px;height:11.6px;background:#d7d7d7"></div>
<div class="abs" style="left:748px;top:414px;width:0.8px;height:11.6px;background:#d7d7d7"></div>
<div class="abs" style="left:0;top:425.8px;width:800px;height:1.4px;background:#3c3c3c"></div>
<div class="abs" style="left:798px;top:44px;width:2px;height:382px;background:#f0f0f0"></div>

</div></body></html>
